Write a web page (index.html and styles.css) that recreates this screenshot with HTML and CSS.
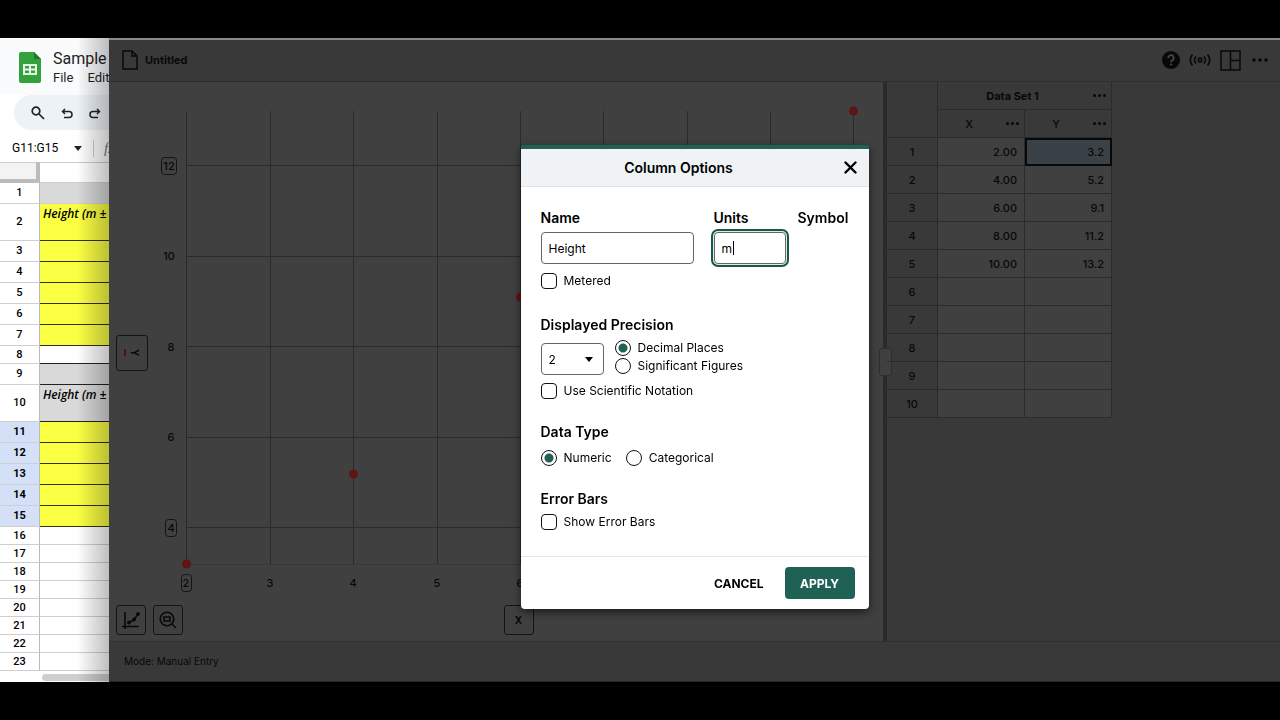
FILE: index.html
```html
<!DOCTYPE html>
<html lang="en">
<head>
    <meta charset="UTF-8">
    <meta name="viewport" content="width=device-width, initial-scale=1.0">
    <title>Untitled</title>
    <link rel="stylesheet" href="styles.css">
</head>
<body>
<div class="screen">

    <!-- Spreadsheet -->
    <section class="sheet">
        <div class="sheet-top">
            <svg class="sheet-logo" width="24" height="32" viewBox="0 0 24 32">
                <path d="M2 0h13l7 7v22a2 2 0 0 1-2 2H2a2 2 0 0 1-2-2V2a2 2 0 0 1 2-2z" fill="#34a23c"/>
                <path d="M15 0l7 7h-7z" fill="#1c7a2b"/>
                <path d="M4 12h14v11H4zM6 14v2.500h4V14zM12 14v2.500h4V14zM6 18.500V21h4v-2.500zM12 18.500V21h4v-2.500z" fill="#e6f5e6" fill-rule="evenodd"/>
            </svg>
            <div>
                <div class="sheet-title">Sample</div>
                <nav class="sheet-menu"><a href="#">File</a><a href="#">Edit</a></nav>
            </div>
        </div>
        <div class="sheet-tools">
            <button aria-label="Search">
                <svg width="14" height="14" viewBox="0 0 14 14" fill="none" stroke="#222" stroke-width="1.700"><circle cx="5" cy="5" r="3.800"/><path d="M8 8l5 5"/></svg>
            </button>
            <button aria-label="Undo">
                <svg width="12" height="12" viewBox="0 0 12 12" fill="none" stroke="#222" stroke-width="1.500"><path d="M4 2L1.500 4.500 4 7M1.500 4.500H8a3 3 0 0 1 0 6H3"/></svg>
            </button>
            <button aria-label="Redo">
                <svg width="12" height="12" viewBox="0 0 12 12" fill="none" stroke="#222" stroke-width="1.500"><path d="M8 2l2.500 2.500L8 7M10.500 4.500H4a3 3 0 0 0 0 6h5"/></svg>
            </button>
        </div>
        <div class="name-box">
            <span class="range">G11:G15</span>
            <svg width="8" height="5" viewBox="0 0 8 5"><path d="M0 0h8L4 5z" fill="#222"/></svg>
            <span class="fx">fx</span>
        </div>
        <table class="cells">
            <tr class="mid corner"><th></th><td></td></tr>
            <tr class="mid gray"><th>1</th><td></td></tr>
            <tr class="tall yellow"><th>2</th><td>Height (m ±</td></tr>
            <tr class="mid yellow"><th>3</th><td></td></tr>
            <tr class="mid yellow"><th>4</th><td></td></tr>
            <tr class="mid yellow"><th>5</th><td></td></tr>
            <tr class="mid yellow"><th>6</th><td></td></tr>
            <tr class="mid yellow"><th>7</th><td></td></tr>
            <tr class="ruled"><th>8</th><td></td></tr>
            <tr class="mid gray ruled"><th>9</th><td></td></tr>
            <tr class="tall gray ruled"><th>10</th><td>Height (m ±</td></tr>
            <tr class="mid yellow picked"><th>11</th><td></td></tr>
            <tr class="mid yellow picked"><th>12</th><td></td></tr>
            <tr class="mid yellow picked"><th>13</th><td></td></tr>
            <tr class="mid yellow picked"><th>14</th><td></td></tr>
            <tr class="mid yellow picked"><th>15</th><td></td></tr>
            <tr><th>16</th><td></td></tr>
            <tr><th>17</th><td></td></tr>
            <tr><th>18</th><td></td></tr>
            <tr><th>19</th><td></td></tr>
            <tr><th>20</th><td></td></tr>
            <tr><th>21</th><td></td></tr>
            <tr><th>22</th><td></td></tr>
            <tr><th>23</th><td></td></tr>
        </table>
        <div class="sheet-scroll"><div></div></div>
    </section>

    <!-- Graph app -->
    <section class="app">
        <header class="app-header">
            <svg width="16" height="20" viewBox="0 0 16 20" fill="none" stroke="#080808" stroke-width="1.500"><path d="M1 1h9l5 5v13H1z"/><path d="M10 1v5h5"/></svg>
            <h1>Untitled</h1>
            <div class="app-icons">
                <button aria-label="Help">
                    <svg width="18" height="18" viewBox="0 0 18 18"><circle cx="9" cy="9" r="9" fill="#080808"/><path d="M6.300 7a2.700 2.700 0 1 1 4 2.300c-.9.500-1.300.9-1.300 2" fill="none" stroke="#4a4a4a" stroke-width="1.700"/><circle cx="9" cy="13.500" r="1.100" fill="#4a4a4a"/></svg>
                </button>
                <button aria-label="Share">
                    <svg width="22" height="16" viewBox="0 0 22 16" fill="none" stroke="#080808" stroke-width="1.700"><circle cx="11" cy="8" r="1.800"/><path d="M7 4.500a5 5 0 0 0 0 7M15 4.500a5 5 0 0 1 0 7M3.500 2.500a8 8 0 0 0 0 11M18.500 2.500a8 8 0 0 1 0 11"/></svg>
                </button>
                <button aria-label="Layout">
                    <svg width="21" height="21" viewBox="0 0 21 21" fill="none" stroke="#080808" stroke-width="1.500"><path d="M1 1h19v19H1zM10.500 1v19M10.500 10.500H20"/></svg>
                </button>
                <button aria-label="More">
                    <svg width="16" height="4" viewBox="0 0 16 4" fill="#080808"><circle cx="2" cy="2" r="1.800"/><circle cx="8" cy="2" r="1.800"/><circle cx="14" cy="2" r="1.800"/></svg>
                </button>
            </div>
        </header>

        <main class="work">
            <div class="graph">
                <div class="graph-main">
                    <button class="tool y-axis" aria-label="Y axis"><span class="dash"></span><span class="turned">Y</span></button>
                    <svg class="plot" height="517" viewBox="0 0 734 517" preserveAspectRatio="xMinYMin">
                        <path class="grid-line" d="M37.500 28v453M121.500 28v453M204.500 28v453M288.500 28v453M371.500 28v453M454.500 28v453M538.500 28v453M621.500 28v453M704.500 28v453"/>
                        <path class="grid-line" d="M37 82.500h668M37 173.500h668M37 263.500h668M37 354.500h668M37 444.500h668"/>
                        <path class="base-line" d="M37 481.500h668"/>
                        <g class="points">
                            <circle cx="37.500" cy="481" r="4.500"/>
                            <circle cx="204.500" cy="391" r="4.500"/>
                            <circle cx="371.500" cy="214" r="4.500"/>
                            <circle cx="538.500" cy="119" r="4.500"/>
                            <circle cx="704.500" cy="28" r="4.500"/>
                        </g>
                        <g class="limits">
                            <rect x="12.500" y="74.500" width="15" height="17" rx="3"/>
                            <rect x="16.500" y="436.500" width="11" height="17" rx="3"/>
                            <rect x="32.500" y="491.500" width="10" height="17" rx="3"/>
                        </g>
                        <g class="ticks">
                            <text x="20" y="87">12</text>
                            <text x="20" y="177">10</text>
                            <text x="22" y="268">8</text>
                            <text x="22" y="358">6</text>
                            <text x="22" y="449">4</text>
                            <text x="37" y="504">2</text>
                            <text x="121" y="504">3</text>
                            <text x="204" y="504">4</text>
                            <text x="288" y="504">5</text>
                            <text x="371" y="504">6</text>
                        </g>
                    </svg>
                </div>
                <div class="graph-tools">
                    <button class="tool" aria-label="Graph tools">
                        <svg width="18" height="18" viewBox="0 0 18 18" fill="none" stroke="#080808" stroke-width="1.600"><path d="M3 1v17M0 15.500h17M7 11.500L12 9l4-6"/><g fill="#080808" stroke="none"><circle cx="7" cy="11.500" r="1.900"/><circle cx="12" cy="8.500" r="1.900"/><circle cx="16" cy="3" r="1.900"/></g></svg>
                    </button>
                    <button class="tool" aria-label="Zoom to fit">
                        <svg width="18" height="18" viewBox="0 0 18 18" fill="none" stroke="#080808" stroke-width="1.600"><circle cx="8" cy="8" r="6.800"/><path d="M13 13l4 4M5 6h6v4H5z"/></svg>
                    </button>
                    <button class="tool x-axis">X</button>
                </div>
            </div>
            <div class="splitter"><div class="grip"></div></div>
            <div class="data">
                <table class="data-table">
                    <thead>
                        <tr>
                            <th rowspan="2"></th>
                            <th colspan="2"><div class="head"><span>Data Set 1</span><button aria-label="Data set options"><i></i><i></i><i></i></button></div></th>
                        </tr>
                        <tr class="columns">
                            <th><div class="head"><span>X</span><button aria-label="X options"><i></i><i></i><i></i></button></div></th>
                            <th><div class="head"><span>Y</span><button aria-label="Y options"><i></i><i></i><i></i></button></div></th>
                        </tr>
                    </thead>
                    <tbody>
                        <tr><th>1</th><td>2.00</td><td class="active">3.2</td></tr>
                        <tr><th>2</th><td>4.00</td><td>5.2</td></tr>
                        <tr><th>3</th><td>6.00</td><td>9.1</td></tr>
                        <tr><th>4</th><td>8.00</td><td>11.2</td></tr>
                        <tr><th>5</th><td>10.00</td><td>13.2</td></tr>
                        <tr><th>6</th><td></td><td></td></tr>
                        <tr><th>7</th><td></td><td></td></tr>
                        <tr><th>8</th><td></td><td></td></tr>
                        <tr><th>9</th><td></td><td></td></tr>
                        <tr><th>10</th><td></td><td></td></tr>
                    </tbody>
                </table>
            </div>
        </main>

        <footer class="status">Mode: Manual Entry</footer>

        <!-- Dialog -->
        <div class="overlay">
            <form class="dialog" role="dialog" aria-labelledby="dialog-title">
                <div class="dialog-header">
                    <h2 id="dialog-title">Column Options</h2>
                    <button type="button" class="close" aria-label="Close">
                        <svg width="13" height="13" viewBox="0 0 13 13" stroke="#000" stroke-width="2.400" stroke-linecap="round"><path d="M1.500 1.500l10 10M11.500 1.500l-10 10"/></svg>
                    </button>
                </div>
                <div class="dialog-body">
                    <section class="naming">
                        <div class="fields">
                            <div><label class="label" for="name">Name</label><input class="text" id="name" type="text" value="Height"></div>
                            <div><label class="label" for="units">Units</label><input class="text units" id="units" type="text" value="m"></div>
                            <div><span class="label">Symbol</span></div>
                        </div>
                        <label class="option"><input type="checkbox">Metered</label>
                    </section>
                    <section>
                        <label class="label" for="digits">Displayed Precision</label>
                        <div class="precision">
                            <select id="digits"><option>2</option></select>
                            <div>
                                <label class="option"><input type="radio" name="precision" checked>Decimal Places</label>
                                <label class="option"><input type="radio" name="precision">Significant Figures</label>
                            </div>
                        </div>
                        <label class="option"><input type="checkbox">Use Scientific Notation</label>
                    </section>
                    <section>
                        <span class="label">Data Type</span>
                        <div class="types">
                            <label class="option"><input type="radio" name="type" checked>Numeric</label>
                            <label class="option"><input type="radio" name="type">Categorical</label>
                        </div>
                    </section>
                    <section>
                        <span class="label">Error Bars</span>
                        <label class="option"><input type="checkbox">Show Error Bars</label>
                    </section>
                </div>
                <div class="dialog-footer">
                    <button type="button" class="cancel">CANCEL</button>
                    <button type="button" class="apply">APPLY</button>
                </div>
            </form>
        </div>
    </section>
</div>

<script>
    const units = document.getElementById("units");
    units.focus();
    units.setSelectionRange(1, 1);
</script>
</body>
</html>
```

FILE: styles.css
```css
/* General Styles */
* {
    box-sizing: border-box;
}

body {
    margin: 0;
    padding: 38px 0;
    min-height: 100vh;
    display: flex;
    background: #000;
    color: #000;
    font-family: Inter, sans-serif;
    font-size: 11px;
}

button {
    padding: 0;
    border: none;
    background: none;
    color: inherit;
    font: inherit;
    cursor: pointer;
}

svg {
    display: block;
}

h1, h2 {
    margin: 0;
}

.screen {
    flex: 1;
    display: flex;
    min-width: 0;
}

/* Spreadsheet */
.sheet {
    position: relative;
    flex: none;
    width: 109px;
    overflow: hidden;
    background: #fff;
    font-family: Roboto, sans-serif;
    white-space: nowrap;
}

.sheet::after {
    content: "";
    position: absolute;
    inset: 0 0 0 auto;
    width: 32px;
    background: linear-gradient(to right, transparent, rgba(0, 0, 0, 0.25));
    pointer-events: none;
}

.sheet-top {
    display: flex;
    gap: 10px;
    height: 57px;
    padding: 11px 0 0 19px;
    background: #f9fbfd;
}

.sheet-logo {
    flex: none;
    margin-top: 3px;
}

.sheet-title {
    font-size: 16px;
    line-height: 20px;
    color: #1f1f1f;
}

.sheet-menu {
    display: flex;
    gap: 14px;
    line-height: 18px;
    font-size: 13px;
}

.sheet-menu a {
    color: #1f1f1f;
    text-decoration: none;
}

.sheet-tools {
    display: flex;
    align-items: center;
    gap: 16px;
    height: 35px;
    margin-left: 14px;
    padding-left: 17px;
    border-radius: 18px 0 0 18px;
    background: #edf2f7;
}

.name-box {
    display: flex;
    align-items: center;
    height: 32px;
    padding: 4px 0 0 12px;
    font-size: 12px;
}

.name-box > * {
    flex: none;
}

.range {
    width: 62px;
}

.fx {
    margin-left: 11px;
    padding-left: 10px;
    border-left: 1px solid #ccc;
    color: #777;
    font: italic 15px "Liberation Serif", serif;
}

.cells {
    width: 100%;
    border-spacing: 0;
    table-layout: fixed;
}

.cells th, .cells td {
    height: 18px;
    padding: 0;
    border-bottom: 1px solid #cfcfcf;
}

.cells th {
    width: 40px;
    border-right: 1px solid #bbb;
    font-size: 11px;
    font-weight: 500;
    line-height: 12px;
}

.cells td {
    padding-left: 3px;
    vertical-align: top;
    font: italic 600 12px/20px "Open Sans", sans-serif;
}

.cells .mid > * {
    height: 21px;
}

.cells .tall > * {
    height: 37px;
}

.cells .corner th {
    border-top: 1px solid #ccc;
    border-right: 4px solid #bbb;
    border-bottom: 4px solid #bbb;
    background: #f3f3f3;
}

.cells .corner td {
    border-top: 1px solid #ccc;
}

.cells .gray td {
    background: #d9d9d9;
}

.cells .ruled td {
    border-bottom-color: #222;
}

.cells .yellow td {
    background: #fbff43;
    border-bottom-color: #33340a;
}

.cells .picked th {
    background: #d3e0f7;
    font-weight: 700;
}

.sheet-scroll {
    padding: 3px 0 0 42px;
}

.sheet-scroll div {
    height: 7px;
    border-radius: 4px 0 0 4px;
    background: #cfcfcf;
}

/* Graph app, dimmed while the dialog is open */
.app {
    position: relative;
    flex: 1;
    min-width: 0;
    display: flex;
    flex-direction: column;
    border-top: 2px solid #8a8a8a;
    background: #393939;
    color: #080808;
}

.app-header {
    display: flex;
    align-items: center;
    gap: 7px;
    height: 42px;
    padding: 0 12px 1px 13px;
    border-bottom: 1px solid #2f2f2f;
}

.app-header h1 {
    font-size: 11px;
    font-weight: 700;
}

.app-icons {
    display: flex;
    align-items: center;
    gap: 9px;
    margin-left: auto;
}

.app-icons button:last-child {
    margin-left: 2px;
}

.work {
    flex: 1;
    display: grid;
    grid-template-columns: 66.1% 4px 1fr;
    min-height: 0;
}

.graph {
    display: flex;
    flex-direction: column;
    padding-top: 1px;
    background: #404040;
}

.graph-main {
    display: flex;
    align-items: center;
}

.tool {
    display: flex;
    align-items: center;
    justify-content: center;
    width: 30px;
    height: 30px;
    border: 1px solid #141414;
    border-radius: 3px;
}

.y-axis {
    flex: none;
    gap: 3px;
    width: 32px;
    height: 36px;
    margin: 22px 1px 0 7px;
    font-size: 10px;
    font-weight: 700;
}

.dash {
    width: 2px;
    height: 7px;
    background: #4d1216;
}

.turned {
    writing-mode: vertical-rl;
}

.plot {
    flex: 1;
    min-width: 0;
}

.grid-line {
    stroke: #2b2b2b;
}

.base-line {
    stroke: #383838;
}

.points {
    fill: #5f1416;
}

.limits {
    fill: none;
    stroke: #141414;
}

.ticks {
    fill: #080808;
    font-size: 11px;
    font-weight: 500;
    text-anchor: middle;
}

.graph-tools {
    display: flex;
    gap: 7px;
    padding: 5px 36px 6px 7px;
}

.x-axis {
    margin: 0 auto;
    font-size: 10px;
    font-weight: 700;
}

.splitter {
    display: flex;
    align-items: center;
    justify-content: center;
    background: #2a2a2a;
}

.grip {
    flex: none;
    width: 13px;
    height: 28px;
    border: 1px solid #2d2d2d;
    border-radius: 3px;
    background: #404040;
}

/* Data table */
.data-table {
    width: 225px;
    border-spacing: 0;
    table-layout: fixed;
    line-height: 14px;
}

.data-table th, .data-table td {
    height: 28px;
    padding: 0 7px;
    border-right: 1px solid #2b2b2b;
    border-bottom: 1px solid #2b2b2b;
    font-weight: 500;
}

.data-table th:first-child[rowspan], .data-table tbody th {
    width: 51px;
}

.data-table thead th {
    padding: 0;
    font-weight: 700;
}

.data-table .columns th {
    font-weight: 500;
}

.data-table td {
    background: #404040;
    text-align: right;
}

.data-table .active {
    background: #3a4247;
    outline: 2px solid #080808;
    outline-offset: -2px;
}

.head {
    display: flex;
    align-items: center;
}

.head span {
    flex: 1;
}

.head button {
    display: flex;
    justify-content: center;
    gap: 2px;
    width: 24px;
}

.head i {
    width: 3px;
    height: 3px;
    border-radius: 50%;
    background: #080808;
}

.status {
    height: 41px;
    padding-left: 15px;
    border-top: 1px solid #2f2f2f;
    border-bottom: 1px solid #2b2422;
    font-size: 10px;
    line-height: 38px;
}

/* Dialog */
.overlay {
    position: absolute;
    inset: 0;
    display: flex;
    align-items: center;
    justify-content: center;
    padding-top: 32px;
}

.dialog {
    width: 348px;
    border-top: 4px solid #206156;
    border-radius: 2px 2px 4px 4px;
    background: #fff;
    color: #000;
    box-shadow: 0 3px 8px rgba(0, 0, 0, 0.6);
    font-size: 12px;
}

.dialog-header {
    display: flex;
    align-items: center;
    height: 38px;
    padding-right: 4px;
    border-bottom: 1px solid #dfe3e5;
    background: #eff3f5;
}

.dialog-header h2 {
    flex: 1;
    text-align: center;
    font-size: 14px;
    font-weight: 600;
}

.close {
    display: flex;
    justify-content: center;
    width: 28px;
}

.dialog-body {
    display: flex;
    flex-direction: column;
    gap: 22px;
    padding: 21px 20px 25px;
}

.naming {
    padding-bottom: 3px;
}

.label {
    display: block;
    margin-bottom: 4px;
    font-size: 14px;
    font-weight: 600;
    line-height: 20px;
}

.fields {
    display: grid;
    grid-template-columns: 173px 84px 1fr;
    margin-bottom: 8px;
}

.text {
    display: block;
    width: 153px;
    height: 32px;
    padding: 0 7px;
    border: 1px solid #666;
    border-radius: 4px;
    background: #fff;
    font: inherit;
}

/* text cursor drawn after the value so that it never blinks */
.units {
    width: 72px;
    background: #fff linear-gradient(#000, #000) no-repeat 18px center / 1px 14px;
    caret-color: transparent;
}

.text:focus {
    outline: 2px solid #17584d;
    outline-offset: 1px;
    box-shadow: 0 0 0 1px #dcebe8;
}

.option {
    display: flex;
    align-items: center;
    gap: 7px;
    line-height: 18px;
}

.option input {
    appearance: none;
    width: 16px;
    height: 16px;
    margin: 0;
    border: 1px solid #111;
    border-radius: 4px;
    background: #fff;
}

.option input[type="radio"] {
    border-radius: 50%;
}

.option input[type="radio"]:checked {
    background: radial-gradient(circle, #206156 4px, #fff 5px);
}

.precision {
    display: flex;
    gap: 11px;
    margin: 4px 0 7px;
}

select {
    appearance: none;
    width: 63px;
    height: 32px;
    margin-top: 4px;
    padding: 0 7px;
    border: 1px solid #666;
    border-radius: 4px;
    background: #fff url("data:image/svg+xml,%3Csvg xmlns='http://www.w3.org/2000/svg' width='8' height='5'%3E%3Cpath d='M0 0h8L4 5z'/%3E%3C/svg%3E") no-repeat right 10px center;
    font: inherit;
}

.types {
    display: flex;
    gap: 14px;
    padding-top: 3px;
}

.dialog-footer {
    display: flex;
    align-items: center;
    justify-content: flex-end;
    gap: 21px;
    height: 53px;
    padding-right: 14px;
    border-top: 1px solid #e4e6e7;
    font-weight: 700;
}

.apply {
    width: 70px;
    height: 32px;
    border-radius: 4px;
    background: #206156;
    color: #fff;
}
```
